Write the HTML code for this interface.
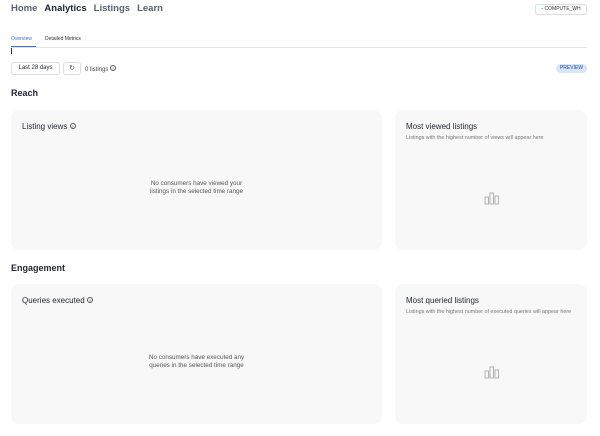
<!DOCTYPE html>
<html><head><style>
*{margin:0;padding:0;box-sizing:border-box}
body{width:600px;height:436px;overflow:hidden;background:#fff;font-family:"Liberation Sans",sans-serif;color:#1e252f;position:relative}
.a{position:absolute}
.nav{top:3px;left:11px;font-size:9.5px;color:#5a6270;font-weight:bold}
.nav span{margin-right:7px}
.card{position:absolute;background:#f8f8f9;border-radius:8px}
.ct{position:absolute;left:11px;top:12px;font-size:8px;color:#1e252f}
.cs{position:absolute;left:11px;top:25px;font-size:5.4px;color:#777}
.em{position:absolute;width:100%;text-align:center;font-size:6.3px;color:#555;line-height:8px}
.h{font-size:9px;font-weight:bold;left:11px}
.q{display:inline-block;width:6px;height:6px;border:0.8px solid #555;border-radius:50%;font-size:4px;text-align:center;line-height:5px;vertical-align:1px}
</style></head><body>
<div class="a nav"><span>Home</span><span style="color:#1e252f">Analytics</span><span>Listings</span><span>Learn</span></div>
<div class="a" style="left:535px;top:4px;width:52px;height:11px;border:1px solid #ddd;border-radius:3px;font-size:5px;line-height:9px;text-align:center;color:#333"><span style="color:#2c9">▪</span> COMPUTE_WH</div>
<div class="a" style="left:11px;top:36px;font-size:5px;color:#3b6fd8">Overview</div>
<div class="a" style="left:45px;top:36px;font-size:5px;color:#333">Detailed Metrics</div>
<div class="a" style="left:11px;top:46px;width:25px;height:1px;background:#3b6fd8"></div>
<div class="a" style="left:11px;top:47px;width:576px;height:1px;background:#e3e3e3"></div>
<div class="a" style="left:11px;top:48px;width:1px;height:6px;background:#333"></div>
<div class="a" style="left:11px;top:62px;width:49px;height:13px;border:1px solid #ddd;border-radius:3px;font-size:6px;line-height:11px;text-align:center">Last 28 days</div>
<div class="a" style="left:63px;top:62px;width:18px;height:13px;border:1px solid #ddd;border-radius:3px;font-size:7px;line-height:11px;text-align:center;color:#555">↻</div>
<div class="a" style="left:85px;top:65px;font-size:6px;color:#444">0 listings <span class="q">?</span></div>
<div class="a" style="left:556px;top:64px;width:31px;height:9px;background:#d8e4fb;border-radius:5px;font-size:5px;line-height:9px;text-align:center;color:#2a4a8a">PREVIEW</div>
<div class="a h" style="top:88px">Reach</div>
<div class="card" style="left:11px;top:110px;width:371px;height:140px"><div class="ct">Listing views <span class="q">?</span></div><div class="em" style="top:70px">No consumers have viewed your<br>listings in the selected time range</div></div>
<div class="card" style="left:395px;top:110px;width:192px;height:140px"><div class="ct">Most viewed listings</div><div class="cs">Listings with the highest number of views will appear here</div>
<svg class="a" style="left:89px;top:82px" width="16" height="13"><g fill="none" stroke="#aaa" stroke-width="0.9"><rect x="1" y="5" width="3.5" height="7"/><rect x="6" y="1" width="3.5" height="11"/><rect x="11" y="4" width="3.5" height="8"/></g></svg></div>
<div class="a h" style="top:263px">Engagement</div>
<div class="card" style="left:11px;top:284px;width:371px;height:140px"><div class="ct">Queries executed <span class="q">?</span></div><div class="em" style="top:70px">No consumers have executed any<br>queries in the selected time range</div></div>
<div class="card" style="left:395px;top:284px;width:192px;height:140px"><div class="ct">Most queried listings</div><div class="cs">Listings with the highest number of executed queries will appear here</div>
<svg class="a" style="left:89px;top:82px" width="16" height="13"><g fill="none" stroke="#aaa" stroke-width="0.9"><rect x="1" y="5" width="3.5" height="7"/><rect x="6" y="1" width="3.5" height="11"/><rect x="11" y="4" width="3.5" height="8"/></g></svg></div>
</body></html>
